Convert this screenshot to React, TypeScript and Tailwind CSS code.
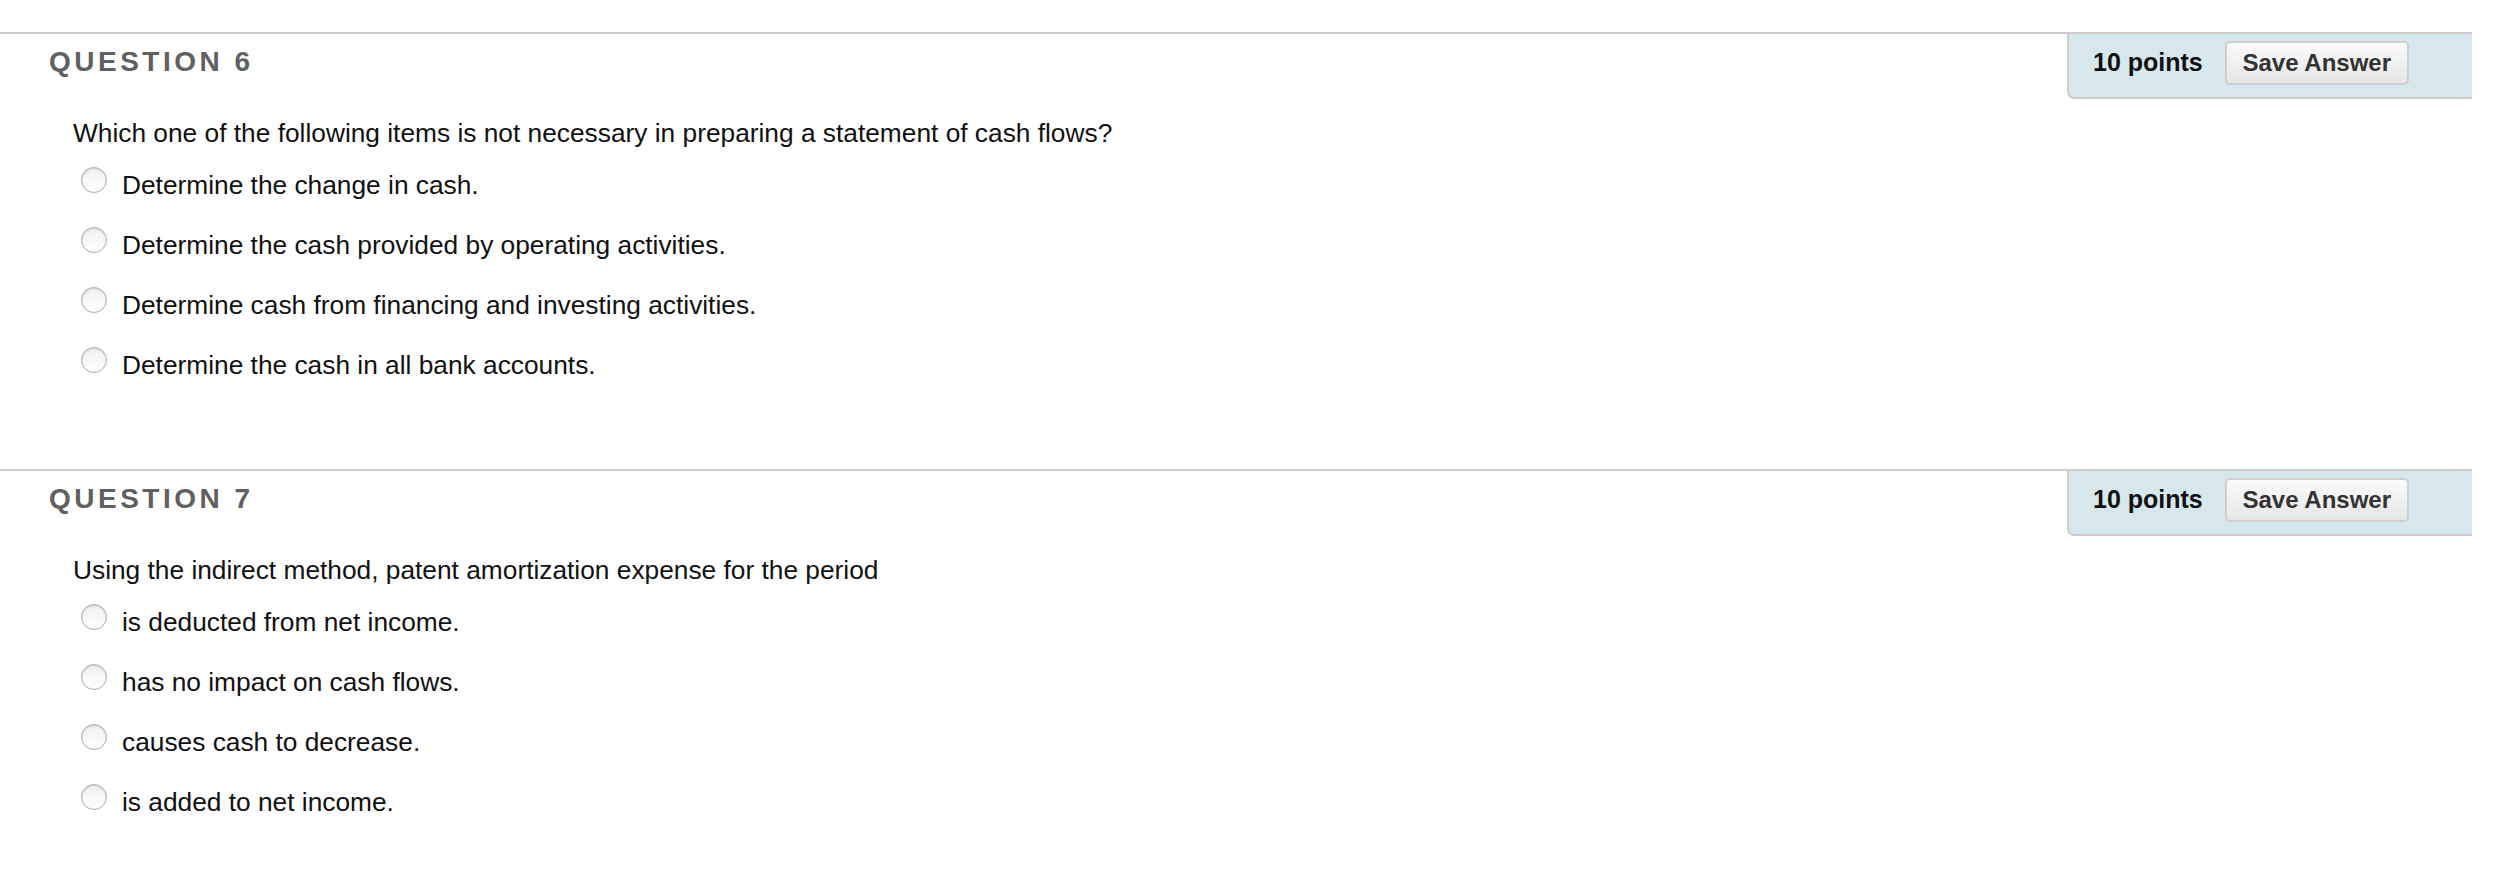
import React from 'react';

type Question = {
  number: number;
  points: number;
  text: string;
  options: string[];
};

const questions: Question[] = [
  {
    number: 6,
    points: 10,
    text: 'Which one of the following items is not necessary in preparing a statement of cash flows?',
    options: [
      'Determine the change in cash.',
      'Determine the cash provided by operating activities.',
      'Determine cash from financing and investing activities.',
      'Determine the cash in all bank accounts.',
    ],
  },
  {
    number: 7,
    points: 10,
    text: 'Using the indirect method, patent amortization expense for the period',
    options: [
      'is deducted from net income.',
      'has no impact on cash flows.',
      'causes cash to decrease.',
      'is added to net income.',
    ],
  },
];

function Radio() {
  return (
    <div className="h-[26px] w-[26px] shrink-0 rounded-full border border-[#adadad] bg-gradient-to-b from-[#f0f0f0] to-white shadow-[inset_0_1px_2px_rgba(0,0,0,0.14)]" />
  );
}

function QuestionBlock({ q }: { q: Question }) {
  return (
    <section className="mr-[22px] h-[437px] border-t-2 border-[#cccccc]">
      <div className="flex items-start justify-between">
        <div className="pl-[49px] pt-[14px] text-[28px] font-bold leading-[28px] tracking-[3.5px] text-[#606060]">
          QUESTION {q.number}
        </div>
        <div className="flex h-[65px] w-[405px] items-start gap-[22px] rounded-bl-[7px] border-b-2 border-l-2 border-[#cccccc] bg-[#d6e8ec] pl-[24px] pt-[7px]">
          <span className="mt-[7px] text-[25px] font-bold leading-[28px] text-[#111111]">
            {q.points} points
          </span>
          <button
            type="button"
            className="h-[44px] w-[184px] rounded-[5px] border-2 border-[#cfcfcf] bg-gradient-to-b from-[#fbfbfb] to-[#e6e6e6] text-[24px] font-bold leading-[28px] text-[#333333]"
          >
            Save Answer
          </button>
        </div>
      </div>

      <p className="mt-[19px] pl-[73px] text-[26.3px] leading-[30px] text-[#111111]">{q.text}</p>

      <div className="mt-[19px] flex flex-col gap-[27px] pl-[81px]">
        {q.options.map((opt) => (
          <label key={opt} className="flex items-start gap-[15px]">
            <Radio />
            <span className="pt-[3px] text-[26.3px] leading-[30px] text-[#111111]">{opt}</span>
          </label>
        ))}
      </div>
    </section>
  );
}

export default function App() {
  return (
    <div className="min-h-[890px] w-[2494px] bg-white pt-[32px] font-['Liberation_Sans',Arial,sans-serif]">
      {questions.map((q) => (
        <QuestionBlock key={q.number} q={q} />
      ))}
    </div>
  );
}
